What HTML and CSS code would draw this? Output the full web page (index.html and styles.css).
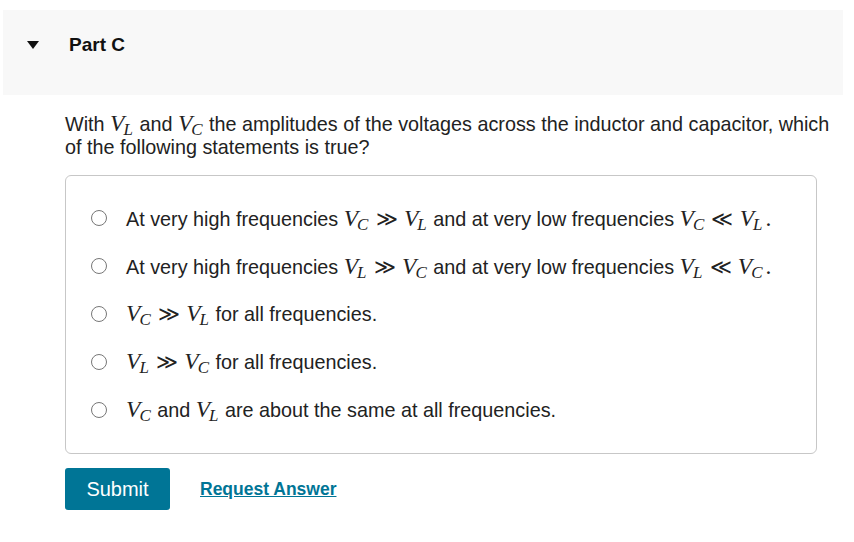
FILE: index.html
```html
<!DOCTYPE html>
<html lang="en">
<head>
    <meta charset="UTF-8">
    <title>Part C</title>
    <link rel="stylesheet" href="styles.css">
</head>
<body>
    <div class="part-header">
        <span class="caret"></span>
        <h2>Part C</h2>
    </div>

    <div class="part-body">
        <p class="question">With <span class="m">V<sub>L</sub></span> and <span class="m">V<sub>C</sub></span> the amplitudes of the voltages across the inductor and capacitor, which of the following statements is true?</p>

        <div class="choices">
            <label class="choice"><span class="radio"></span><span>At very high frequencies <span class="m">V<sub>C</sub></span><span class="op">≫</span><span class="m">V<sub>L</sub></span> and at very low frequencies <span class="m">V<sub>C</sub></span><span class="op">≪</span><span class="m">V<sub>L</sub></span><span class="m-dot">.</span></span></label>
            <label class="choice"><span class="radio"></span><span>At very high frequencies <span class="m">V<sub>L</sub></span><span class="op">≫</span><span class="m">V<sub>C</sub></span> and at very low frequencies <span class="m">V<sub>L</sub></span><span class="op">≪</span><span class="m">V<sub>C</sub></span><span class="m-dot">.</span></span></label>
            <label class="choice"><span class="radio"></span><span><span class="m">V<sub>C</sub></span><span class="op">≫</span><span class="m">V<sub>L</sub></span> for all frequencies.</span></label>
            <label class="choice"><span class="radio"></span><span><span class="m">V<sub>L</sub></span><span class="op">≫</span><span class="m">V<sub>C</sub></span> for all frequencies.</span></label>
            <label class="choice"><span class="radio"></span><span><span class="m">V<sub>C</sub></span> and <span class="m">V<sub>L</sub></span> are about the same at all frequencies.</span></label>
        </div>

        <div class="actions">
            <button type="button" class="submit">Submit</button>
            <a href="#" class="request">Request Answer</a>
        </div>
    </div>
</body>
</html>
```

FILE: styles.css
```css
body {
    margin: 0;
    padding: 10px 11px 0 3px;
    font-family: "Liberation Sans", Arial, sans-serif;
    color: #222;
    background: #fff;
}
.part-header {
    display: flex;
    align-items: center;
    height: 85px;
    background: #f8f8f8;
    padding-left: 24px;
    padding-bottom: 16px;
    box-sizing: border-box;
}
.caret {
    width: 0;
    height: 0;
    border-left: 6px solid transparent;
    border-right: 6px solid transparent;
    border-top: 8px solid #111;
    margin-right: 30px;
}
h2 {
    margin: 0;
    font-size: 19px;
    font-weight: bold;
    color: #111;
}
.part-body {
    padding: 17px 26px 0 62px;
}
.question {
    margin: 0 -14px 16px 0;
    font-size: 19.8px;
    line-height: 23px;
}
.m {
    font-family: "Liberation Serif", "Times New Roman", serif;
    font-style: italic;
    font-size: 1.19em;
    line-height: 1;
    padding-right: 1px;
}
.m sub {
    font-size: 0.72em;
    vertical-align: -0.25em;
    line-height: 0;
    margin-left: -1px;
}
.op {
    font-family: "DejaVu Serif", serif;
    font-size: 1.05em;
    line-height: 1;
    margin: 0 0.3em;
}
.m-dot {
    font-family: "Liberation Serif", serif;
    font-size: 1.19em;
    margin-left: 2px;
}
.choices {
    border: 1px solid #c7c7c7;
    border-radius: 6px;
    padding: 30px 0 31px 25px;
    display: flex;
    flex-direction: column;
    gap: 24px;
}
.choice {
    display: flex;
    align-items: center;
    font-size: 19.8px;
    line-height: 24px;
    height: 24px;
}
.radio {
    width: 14px;
    height: 14px;
    border: 1.5px solid #777;
    border-radius: 50%;
    margin-right: 19px;
    flex-shrink: 0;
}
.actions {
    display: flex;
    align-items: center;
    margin-top: 14px;
}
.submit {
    background: #007596;
    color: #fff;
    border: none;
    border-radius: 3px;
    font-family: inherit;
    font-size: 20px;
    width: 105px;
    height: 42px;
    cursor: pointer;
}
.request {
    margin-left: 30px;
    color: #007596;
    font-weight: bold;
    font-size: 17.5px;
}
```
